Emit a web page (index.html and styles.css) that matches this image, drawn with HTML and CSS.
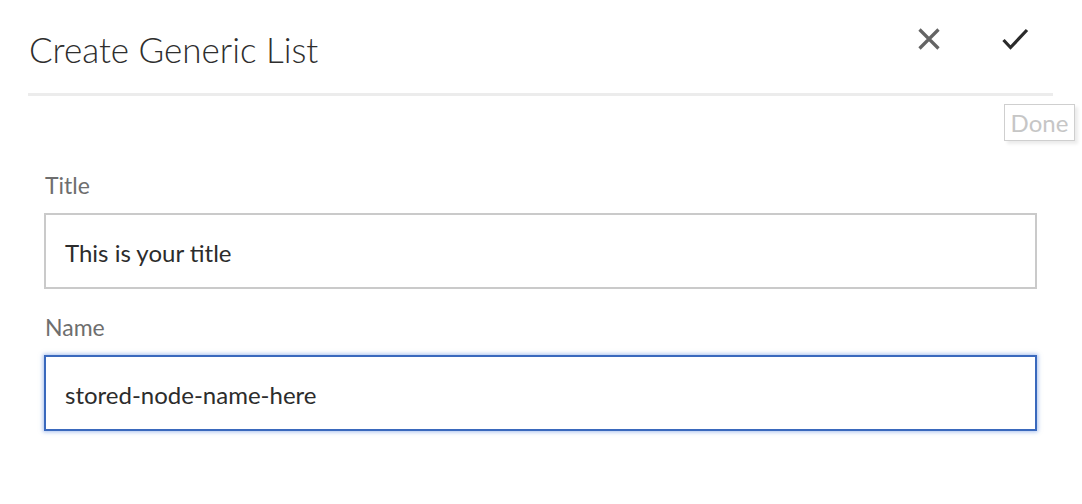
FILE: index.html
```html
<!DOCTYPE html>
<html>
<head>
<meta charset="utf-8">
<link rel="stylesheet" href="styles.css">
</head>
<body>
<div class="dialog">
  <header class="head">
    <h1 class="head-title">Create Generic List</h1>
    <div class="actions">
      <button class="icon-btn close" aria-label="Cancel">
        <svg width="24" height="24" viewBox="0 0 24 24"><path d="M2.5 2.5 L21.5 21.5 M21.5 2.5 L2.5 21.5" stroke="#646464" stroke-width="3.2" fill="none" stroke-linecap="butt"/></svg>
      </button>
      <button class="icon-btn check" aria-label="Done">
        <svg width="28" height="24" viewBox="0 0 28 24"><path d="M2.5 13 L9.5 20.5 L26 3" stroke="#2a2a2a" stroke-width="3.2" fill="none" stroke-linecap="butt" stroke-linejoin="miter"/></svg>
      </button>
    </div>
  </header>
  <div class="tooltip">Done</div>
  <form class="form">
    <label class="field">
      <span class="label">Title</span>
      <span class="input">This is your title</span>
    </label>
    <label class="field">
      <span class="label">Name</span>
      <span class="input focused">stored-node-name-here</span>
    </label>
  </form>
</div>
</body>
</html>
```
FILE: styles.css
```css
html, body {
  margin: 0;
  padding: 0;
  background: #ffffff;
}
body {
  font-family: "Lato", "Noto Sans", sans-serif;
  color: #2c2c2c;
  width: 1082px;
  height: 504px;
  overflow: hidden;
}
.dialog {
  position: relative;
}
.head {
  display: flex;
  align-items: flex-start;
  justify-content: space-between;
  margin: 0 29px 0 28px;
  height: 93px;
  border-bottom: 3px solid #ececec;
}
.head-title {
  margin: 28px 0 0 1px;
  font-weight: 300;
  font-size: 35px;
  line-height: 42px;
  color: #2e2e2e;
}
.actions {
  display: flex;
  align-items: flex-start;
  gap: 60px;
  margin: 27px 24px 0 0;
}
.icon-btn {
  border: 0;
  background: none;
  padding: 0;
  display: flex;
}
.tooltip {
  position: absolute;
  left: 1004px;
  top: 104px;
  width: 69px;
  height: 35px;
  border: 1px solid #cfcfcf;
  box-shadow: 3px 3px 3px rgba(0,0,0,0.08);
  color: #c6c6c6;
  font-size: 24px;
  line-height: 36px;
  text-align: center;
  background: #fff;
}
.form {
  display: flex;
  flex-direction: column;
  gap: 24px;
  padding: 75px 45px 0 44px;
}
.field {
  display: flex;
  flex-direction: column;
  gap: 14px;
}
.label {
  font-size: 23px;
  line-height: 28px;
  color: #6e6e6e;
  padding-left: 1px;
}
.input {
  display: flex;
  align-items: center;
  box-sizing: border-box;
  height: 76px;
  border: 2px solid #cacaca;
  padding: 2px 19px 0;
  font-size: 24px;
  color: #2c2c2c;
}
.input.focused {
  border-color: #3a69bd;
  box-shadow: 0 0 4px 1px rgba(80,130,220,0.5);
}
```
